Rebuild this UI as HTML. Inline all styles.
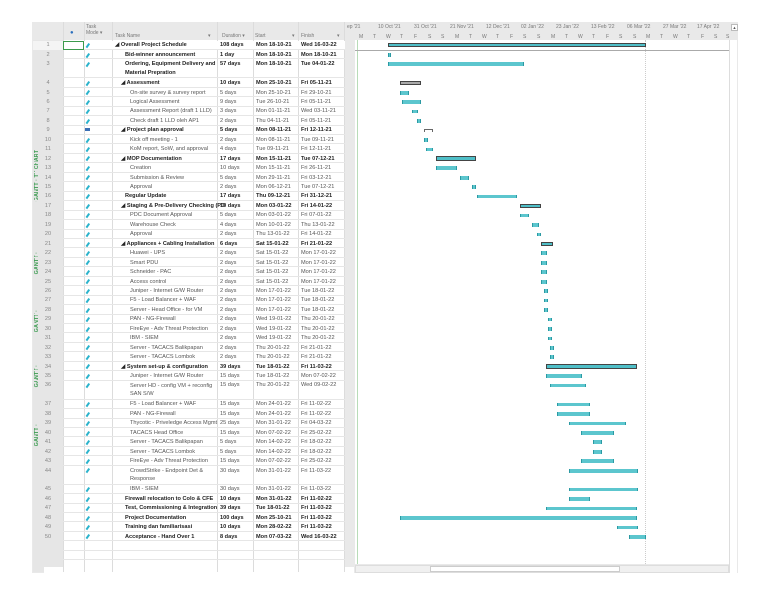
<!DOCTYPE html>
<html><head><meta charset="utf-8"><style>
*{margin:0;padding:0;box-sizing:border-box}
body{width:768px;height:594px;background:#fff;position:relative;overflow:hidden;font-family:"Liberation Sans",sans-serif;font-size:5.6px;color:#555}
#frame{position:absolute;left:32px;top:22px;width:706px;height:551px;background:#e9e9e9}
#tbl{position:absolute;left:63px;top:40px;width:282px;height:532px;background:#fff}
#gnt{position:absolute;left:355px;top:40px;width:374px;height:524px;background:#fff}
.hd{position:absolute;top:22px;height:18px;color:#777;font-size:5px}
.vl{position:absolute;top:22px;width:1px;height:550px;background:#dcdcdc}
.r{position:absolute;left:33px;height:9.45px;width:312px;border-bottom:1px solid #e6e6e6}
.r.d2{height:18.9px}
.r span{position:absolute;top:1.8px;white-space:nowrap}
.n{left:0;width:30px;text-align:center;color:#888}
.m{left:54px;top:2.5px!important;width:1.6px;height:4.5px;background:#2ab3cc;transform:rotate(35deg)}
.t{left:80px}
.u{left:187px}
.s{left:223px}
.f{left:268px}
.b{font-weight:bold;color:#222}
.two{line-height:8.6px;top:1px!important}
.bar{position:absolute;height:3.8px;top:3px;background:#5cc6ce;border-left:1px solid #2c9aa3;border-right:1px solid #2c9aa3}
.sum{background:#4fbfc8;border:1px solid #444;height:4.4px;top:2.6px}
.br{background:transparent;border:1px solid #666;border-bottom:none;height:3px}
.gl{position:absolute;writing-mode:vertical-rl;transform:rotate(180deg);color:#3d9c52;font-size:5.5px;font-weight:bold;left:34px}
.lt{position:absolute;top:34px;font-size:5px;color:#777}
.dt{position:absolute;top:24px;font-size:5px;color:#777;white-space:nowrap}
</style></head><body>
<div id="frame"></div>
<div id="tbl"></div>
<div id="gnt"></div>
<div style="position:absolute;left:33px;top:40px;width:30px;height:532px;background:#e6e6e6"></div>
<div style="position:absolute;left:44px;top:567px;width:310px;height:8px;background:#fff"></div>
<div class="hd" style="left:70px;top:30px;color:#2a6fbd;font-weight:bold;font-size:6px">●</div>
<div class="hd" style="left:86px;top:24px;line-height:6px">Task<br>Mode ▾</div>
<div class="hd" style="left:115px;top:33px">Task Name</div>
<div class="hd" style="left:208px;top:33px">▾</div>
<div class="hd" style="left:222px;top:33px">Duration ▾</div>
<div class="hd" style="left:255px;top:33px">Start</div>
<div class="hd" style="left:292px;top:33px">▾</div>
<div class="hd" style="left:301px;top:33px">Finish</div>
<div class="hd" style="left:337px;top:33px">▾</div>
<div class="vl" style="left:63px"></div><div class="vl" style="left:84px"></div><div class="vl" style="left:112px"></div><div class="vl" style="left:217px"></div><div class="vl" style="left:253px"></div><div class="vl" style="left:298px"></div><div class="vl" style="left:344px"></div>
<div class="dt" style="left:347px">ep '21</div><div class="dt" style="left:378px">10 Oct '21</div><div class="dt" style="left:414px">31 Oct '21</div><div class="dt" style="left:450px">21 Nov '21</div><div class="dt" style="left:486px">12 Dec '21</div><div class="dt" style="left:521px">02 Jan '22</div><div class="dt" style="left:556px">23 Jan '22</div><div class="dt" style="left:591px">13 Feb '22</div><div class="dt" style="left:627px">06 Mar '22</div><div class="dt" style="left:663px">27 Mar '22</div><div class="dt" style="left:697px">17 Apr '22</div>
<div class="lt" style="left:359px">M</div><div class="lt" style="left:373px">T</div><div class="lt" style="left:386px">W</div><div class="lt" style="left:400px">T</div><div class="lt" style="left:414px">F</div><div class="lt" style="left:428px">S</div><div class="lt" style="left:441px">S</div><div class="lt" style="left:455px">M</div><div class="lt" style="left:469px">T</div><div class="lt" style="left:482px">W</div><div class="lt" style="left:496px">T</div><div class="lt" style="left:510px">F</div><div class="lt" style="left:523px">S</div><div class="lt" style="left:537px">S</div><div class="lt" style="left:551px">M</div><div class="lt" style="left:565px">T</div><div class="lt" style="left:578px">W</div><div class="lt" style="left:592px">T</div><div class="lt" style="left:606px">F</div><div class="lt" style="left:619px">S</div><div class="lt" style="left:633px">S</div><div class="lt" style="left:646px">M</div><div class="lt" style="left:660px">T</div><div class="lt" style="left:673px">W</div><div class="lt" style="left:687px">T</div><div class="lt" style="left:701px">F</div><div class="lt" style="left:714px">S</div><div class="lt" style="left:726px">S</div>
<div style="position:absolute;left:731px;top:24px;width:7px;height:7px;background:#fff;border:1px solid #bbb;font-size:4px;text-align:center;line-height:5px">▲</div>
<div style="position:absolute;left:357px;top:40px;width:1px;height:524px;background:#b8dcb8"></div>
<div style="position:absolute;left:645px;top:40px;width:0;height:524px;border-left:1px dotted #ccc"></div>
<div style="position:absolute;left:355px;top:50px;width:374px;height:1px;background:#aaa"></div>
<div style="position:absolute;left:355px;top:565px;width:374px;height:8px;background:#f0f0f0;border:1px solid #ddd"></div>
<div style="position:absolute;left:430px;top:566px;width:190px;height:6px;background:#fff;border:1px solid #ccc"></div>
<div style="position:absolute;left:729px;top:40px;width:8px;height:533px;background:#fff;border-left:1px solid #ddd"></div>
<div class="gl" style="top:150px">GANTT · TT CHART</div>
<div class="gl" style="top:252px">GANTT ·</div>
<div class="gl" style="top:310px">GANTT ·</div>
<div class="gl" style="top:365px">GANTT ·</div>
<div class="gl" style="top:424px">GANTT ·</div>

<div class="r" style="top:40.5px;background:#fff"><span class="n" style="top:0;height:9px;background:#f4f4f4;padding-top:1.8px">1</span><span style="left:30px;top:0;width:21px;height:9px;border:1px solid #3c9a4c"></span><span class="m"></span><span class="t b" style="left:82px">◢ Overall Project Schedule</span><span class="u b">108 days</span><span class="s b">Mon 18-10-21</span><span class="f b">Wed 16-03-22</span><div class="bar sum" style="left:355px;width:258px"></div></div>
<div class="r" style="top:50px"><span class="n">2</span><span class="m"></span><span class="t b" style="left:92px">Bid-winner announcement</span><span class="u b">1 day</span><span class="s b">Mon 18-10-21</span><span class="f b">Mon 18-10-21</span><div class="bar" style="left:355px;width:3px"></div></div>
<div class="r d2" style="top:59.4px"><span class="n">3</span><span class="m"></span><span class="t b two" style="left:92px">Ordering, Equipment Delivery and<br>Material Prepration</span><span class="u b">57 days</span><span class="s b">Mon 18-10-21</span><span class="f b">Tue 04-01-22</span><div class="bar" style="left:355px;width:136px"></div></div>
<div class="r" style="top:78.3px"><span class="n">4</span><span class="m"></span><span class="t b" style="left:88px">◢ Assessment</span><span class="u b">10 days</span><span class="s b">Mon 25-10-21</span><span class="f b">Fri 05-11-21</span><div class="bar sum" style="left:367px;width:21px;background:#aaa"></div></div>
<div class="r" style="top:87.8px"><span class="n">5</span><span class="m"></span><span class="t" style="left:97px">On-site survey &amp; survey report</span><span class="u">5 days</span><span class="s">Mon 25-10-21</span><span class="f">Fri 29-10-21</span><div class="bar" style="left:367px;width:9px"></div></div>
<div class="r" style="top:97.2px"><span class="n">6</span><span class="m"></span><span class="t" style="left:97px">Logical Assessment</span><span class="u">9 days</span><span class="s">Tue 26-10-21</span><span class="f">Fri 05-11-21</span><div class="bar" style="left:369px;width:19px"></div></div>
<div class="r" style="top:106.7px"><span class="n">7</span><span class="m"></span><span class="t" style="left:97px">Assessment Report (draft 1 LLD)</span><span class="u">3 days</span><span class="s">Mon 01-11-21</span><span class="f">Wed 03-11-21</span><div class="bar" style="left:379px;width:5.5px"></div></div>
<div class="r" style="top:116.1px"><span class="n">8</span><span class="m"></span><span class="t" style="left:97px">Check draft 1 LLD oleh AP1</span><span class="u">2 days</span><span class="s">Thu 04-11-21</span><span class="f">Fri 05-11-21</span><div class="bar" style="left:384px;width:4px"></div></div>
<div class="r" style="top:125.6px"><span class="n">9</span><span style="left:52px;top:2.5px;width:5px;height:3px;background:#3a6fb5"></span><span class="t b" style="left:88px">◢ Project plan approval</span><span class="u b">5 days</span><span class="s b">Mon 08-11-21</span><span class="f b">Fri 12-11-21</span><div class="bar br" style="left:391px;width:9px"></div></div>
<div class="r" style="top:135px"><span class="n">10</span><span class="m"></span><span class="t" style="left:97px">Kick off meeting - 1</span><span class="u">2 days</span><span class="s">Mon 08-11-21</span><span class="f">Tue 09-11-21</span><div class="bar" style="left:391px;width:4px"></div></div>
<div class="r" style="top:144.5px"><span class="n">11</span><span class="m"></span><span class="t" style="left:97px">KoM report, SoW, and approval</span><span class="u">4 days</span><span class="s">Tue 09-11-21</span><span class="f">Fri 12-11-21</span><div class="bar" style="left:393px;width:7px"></div></div>
<div class="r" style="top:153.9px"><span class="n">12</span><span class="m"></span><span class="t b" style="left:88px">◢ MOP Documentation</span><span class="u b">17 days</span><span class="s b">Mon 15-11-21</span><span class="f b">Tue 07-12-21</span><div class="bar sum" style="left:403px;width:40px"></div></div>
<div class="r" style="top:163.4px"><span class="n">13</span><span class="m"></span><span class="t" style="left:97px">Creation</span><span class="u">10 days</span><span class="s">Mon 15-11-21</span><span class="f">Fri 26-11-21</span><div class="bar" style="left:403px;width:21px"></div></div>
<div class="r" style="top:172.8px"><span class="n">14</span><span class="m"></span><span class="t" style="left:97px">Submission &amp; Review</span><span class="u">5 days</span><span class="s">Mon 29-11-21</span><span class="f">Fri 03-12-21</span><div class="bar" style="left:427px;width:9px"></div></div>
<div class="r" style="top:182.3px"><span class="n">15</span><span class="m"></span><span class="t" style="left:97px">Approval</span><span class="u">2 days</span><span class="s">Mon 06-12-21</span><span class="f">Tue 07-12-21</span><div class="bar" style="left:439px;width:4px"></div></div>
<div class="r" style="top:191.7px"><span class="n">16</span><span class="m"></span><span class="t b" style="left:92px">Regular Update</span><span class="u b">17 days</span><span class="s b">Thu 09-12-21</span><span class="f b">Fri 31-12-21</span><div class="bar" style="left:444px;width:40px"></div></div>
<div class="r" style="top:201.2px"><span class="n">17</span><span class="m"></span><span class="t b" style="left:88px">◢ Staging &amp; Pre-Delivery Checking (PD</span><span class="u b">10 days</span><span class="s b">Mon 03-01-22</span><span class="f b">Fri 14-01-22</span><div class="bar sum" style="left:487px;width:21px"></div></div>
<div class="r" style="top:210.6px"><span class="n">18</span><span class="m"></span><span class="t" style="left:97px">PDC Document Approval</span><span class="u">5 days</span><span class="s">Mon 03-01-22</span><span class="f">Fri 07-01-22</span><div class="bar" style="left:487px;width:9px"></div></div>
<div class="r" style="top:220.1px"><span class="n">19</span><span class="m"></span><span class="t" style="left:97px">Warehouse Check</span><span class="u">4 days</span><span class="s">Mon 10-01-22</span><span class="f">Thu 13-01-22</span><div class="bar" style="left:499px;width:7px"></div></div>
<div class="r" style="top:229.5px"><span class="n">20</span><span class="m"></span><span class="t" style="left:97px">Approval</span><span class="u">2 days</span><span class="s">Thu 13-01-22</span><span class="f">Fri 14-01-22</span><div class="bar" style="left:504px;width:4px"></div></div>
<div class="r" style="top:239px"><span class="n">21</span><span class="m"></span><span class="t b" style="left:88px">◢ Appliances + Cabling Installation</span><span class="u b">6 days</span><span class="s b">Sat 15-01-22</span><span class="f b">Fri 21-01-22</span><div class="bar sum" style="left:508px;width:12px"></div></div>
<div class="r" style="top:248.4px"><span class="n">22</span><span class="m"></span><span class="t" style="left:97px">Huawei - UPS</span><span class="u">2 days</span><span class="s">Sat 15-01-22</span><span class="f">Mon 17-01-22</span><div class="bar" style="left:508px;width:5.5px"></div></div>
<div class="r" style="top:257.9px"><span class="n">23</span><span class="m"></span><span class="t" style="left:97px">Smart PDU</span><span class="u">2 days</span><span class="s">Sat 15-01-22</span><span class="f">Mon 17-01-22</span><div class="bar" style="left:508px;width:5.5px"></div></div>
<div class="r" style="top:267.3px"><span class="n">24</span><span class="m"></span><span class="t" style="left:97px">Schneider - PAC</span><span class="u">2 days</span><span class="s">Sat 15-01-22</span><span class="f">Mon 17-01-22</span><div class="bar" style="left:508px;width:5.5px"></div></div>
<div class="r" style="top:276.8px"><span class="n">25</span><span class="m"></span><span class="t" style="left:97px">Access control</span><span class="u">2 days</span><span class="s">Sat 15-01-22</span><span class="f">Mon 17-01-22</span><div class="bar" style="left:508px;width:5.5px"></div></div>
<div class="r" style="top:286.2px"><span class="n">26</span><span class="m"></span><span class="t" style="left:97px">Juniper - Internet G/W Router</span><span class="u">2 days</span><span class="s">Mon 17-01-22</span><span class="f">Tue 18-01-22</span><div class="bar" style="left:511px;width:4px"></div></div>
<div class="r" style="top:295.7px"><span class="n">27</span><span class="m"></span><span class="t" style="left:97px">F5 - Load Balancer + WAF</span><span class="u">2 days</span><span class="s">Mon 17-01-22</span><span class="f">Tue 18-01-22</span><div class="bar" style="left:511px;width:4px"></div></div>
<div class="r" style="top:305.1px"><span class="n">28</span><span class="m"></span><span class="t" style="left:97px">Server - Head Office - for VM</span><span class="u">2 days</span><span class="s">Mon 17-01-22</span><span class="f">Tue 18-01-22</span><div class="bar" style="left:511px;width:4px"></div></div>
<div class="r" style="top:314.6px"><span class="n">29</span><span class="m"></span><span class="t" style="left:97px">PAN - NG-Firewall</span><span class="u">2 days</span><span class="s">Wed 19-01-22</span><span class="f">Thu 20-01-22</span><div class="bar" style="left:515px;width:4px"></div></div>
<div class="r" style="top:324px"><span class="n">30</span><span class="m"></span><span class="t" style="left:97px">FireEye - Adv Threat Protection</span><span class="u">2 days</span><span class="s">Wed 19-01-22</span><span class="f">Thu 20-01-22</span><div class="bar" style="left:515px;width:4px"></div></div>
<div class="r" style="top:333.5px"><span class="n">31</span><span class="m"></span><span class="t" style="left:97px">IBM - SIEM</span><span class="u">2 days</span><span class="s">Wed 19-01-22</span><span class="f">Thu 20-01-22</span><div class="bar" style="left:515px;width:4px"></div></div>
<div class="r" style="top:342.9px"><span class="n">32</span><span class="m"></span><span class="t" style="left:97px">Server - TACACS Balikpapan</span><span class="u">2 days</span><span class="s">Thu 20-01-22</span><span class="f">Fri 21-01-22</span><div class="bar" style="left:516.5px;width:4px"></div></div>
<div class="r" style="top:352.4px"><span class="n">33</span><span class="m"></span><span class="t" style="left:97px">Server - TACACS Lombok</span><span class="u">2 days</span><span class="s">Thu 20-01-22</span><span class="f">Fri 21-01-22</span><div class="bar" style="left:516.5px;width:4px"></div></div>
<div class="r" style="top:361.8px"><span class="n">34</span><span class="m"></span><span class="t b" style="left:88px">◢ System set-up &amp; configuration</span><span class="u b">39 days</span><span class="s b">Tue 18-01-22</span><span class="f b">Fri 11-03-22</span><div class="bar sum" style="left:513px;width:91px"></div></div>
<div class="r" style="top:371.3px"><span class="n">35</span><span class="m"></span><span class="t" style="left:97px">Juniper - Internet G/W Router</span><span class="u">15 days</span><span class="s">Tue 18-01-22</span><span class="f">Mon 07-02-22</span><div class="bar" style="left:513px;width:36px"></div></div>
<div class="r d2" style="top:380.7px"><span class="n">36</span><span class="m"></span><span class="t two" style="left:97px">Server HD - config VM + reconfig<br>SAN S/W</span><span class="u">15 days</span><span class="s">Thu 20-01-22</span><span class="f">Wed 09-02-22</span><div class="bar" style="left:516.5px;width:36px"></div></div>
<div class="r" style="top:399.6px"><span class="n">37</span><span class="m"></span><span class="t" style="left:97px">F5 - Load Balancer + WAF</span><span class="u">15 days</span><span class="s">Mon 24-01-22</span><span class="f">Fri 11-02-22</span><div class="bar" style="left:523.5px;width:33px"></div></div>
<div class="r" style="top:409.1px"><span class="n">38</span><span class="m"></span><span class="t" style="left:97px">PAN - NG-Firewall</span><span class="u">15 days</span><span class="s">Mon 24-01-22</span><span class="f">Fri 11-02-22</span><div class="bar" style="left:523.5px;width:33px"></div></div>
<div class="r" style="top:418.5px"><span class="n">39</span><span class="m"></span><span class="t" style="left:97px">Thycotic - Priveledge Access Mgmt</span><span class="u">25 days</span><span class="s">Mon 31-01-22</span><span class="f">Fri 04-03-22</span><div class="bar" style="left:535.5px;width:57px"></div></div>
<div class="r" style="top:428px"><span class="n">40</span><span class="m"></span><span class="t" style="left:97px">TACACS Head Office</span><span class="u">15 days</span><span class="s">Mon 07-02-22</span><span class="f">Fri 25-02-22</span><div class="bar" style="left:547.5px;width:33px"></div></div>
<div class="r" style="top:437.4px"><span class="n">41</span><span class="m"></span><span class="t" style="left:97px">Server - TACACS Balikpapan</span><span class="u">5 days</span><span class="s">Mon 14-02-22</span><span class="f">Fri 18-02-22</span><div class="bar" style="left:559.5px;width:9px"></div></div>
<div class="r" style="top:446.9px"><span class="n">42</span><span class="m"></span><span class="t" style="left:97px">Server - TACACS Lombok</span><span class="u">5 days</span><span class="s">Mon 14-02-22</span><span class="f">Fri 18-02-22</span><div class="bar" style="left:559.5px;width:9px"></div></div>
<div class="r" style="top:456.3px"><span class="n">43</span><span class="m"></span><span class="t" style="left:97px">FireEye - Adv Threat Protection</span><span class="u">15 days</span><span class="s">Mon 07-02-22</span><span class="f">Fri 25-02-22</span><div class="bar" style="left:547.5px;width:33px"></div></div>
<div class="r d2" style="top:465.8px"><span class="n">44</span><span class="m"></span><span class="t two" style="left:97px">CrowdStrike - Endpoint Det &amp;<br>Response</span><span class="u">30 days</span><span class="s">Mon 31-01-22</span><span class="f">Fri 11-03-22</span><div class="bar" style="left:535.5px;width:69px"></div></div>
<div class="r" style="top:484.7px"><span class="n">45</span><span class="m"></span><span class="t" style="left:97px">IBM - SIEM</span><span class="u">30 days</span><span class="s">Mon 31-01-22</span><span class="f">Fri 11-03-22</span><div class="bar" style="left:535.5px;width:69px"></div></div>
<div class="r" style="top:494.1px"><span class="n">46</span><span class="m"></span><span class="t b" style="left:92px">Firewall relocation to Colo &amp; CFE</span><span class="u b">10 days</span><span class="s b">Mon 31-01-22</span><span class="f b">Fri 11-02-22</span><div class="bar" style="left:535.5px;width:21px"></div></div>
<div class="r" style="top:503.6px"><span class="n">47</span><span class="m"></span><span class="t b" style="left:92px">Test, Commissioning &amp; Integration</span><span class="u b">39 days</span><span class="s b">Tue 18-01-22</span><span class="f b">Fri 11-03-22</span><div class="bar" style="left:513px;width:91px"></div></div>
<div class="r" style="top:513px"><span class="n">48</span><span class="m"></span><span class="t b" style="left:92px">Project Documentation</span><span class="u b">100 days</span><span class="s b">Mon 25-10-21</span><span class="f b">Fri 11-03-22</span><div class="bar" style="left:367px;width:237px"></div></div>
<div class="r" style="top:522.5px"><span class="n">49</span><span class="m"></span><span class="t b" style="left:92px">Training dan familiarisasi</span><span class="u b">10 days</span><span class="s b">Mon 28-02-22</span><span class="f b">Fri 11-03-22</span><div class="bar" style="left:584px;width:21px"></div></div>
<div class="r" style="top:531.9px"><span class="n">50</span><span class="m"></span><span class="t b" style="left:92px">Acceptance - Hand Over 1</span><span class="u b">8 days</span><span class="s b">Mon 07-03-22</span><span class="f b">Wed 16-03-22</span><div class="bar" style="left:596px;width:17px"></div></div>
<div class="r" style="top:541.4px"></div>
<div class="r" style="top:550.8px"></div>
<div class="r" style="top:560.3px;border-bottom:none"></div>
</body></html>
